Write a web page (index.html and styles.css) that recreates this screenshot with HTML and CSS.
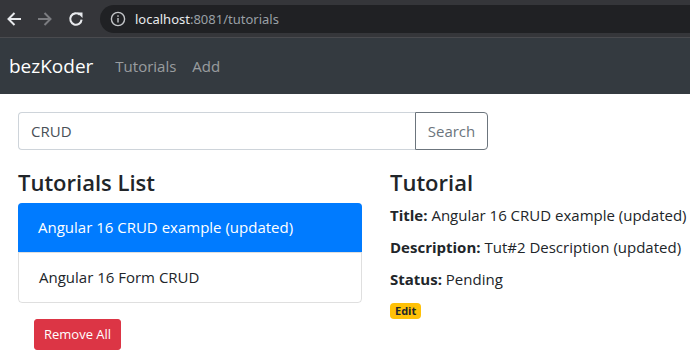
FILE: index.html
```html
<!DOCTYPE html>
<html lang="en">
<head>
    <meta charset="UTF-8">
    <meta name="viewport" content="width=device-width, initial-scale=1.0">
    <title>Tutorials</title>
    <link rel="stylesheet" href="styles.css">
</head>
<body>
    <div class="chrome">
        <div class="nav-icons">
            <svg class="icon" viewBox="0 0 16 16" width="16" height="16">
                <path d="M15 8H2.5M8.5 2L2.5 8l6 6" fill="none" stroke="#e8eaed" stroke-width="2"/>
            </svg>
            <svg class="icon" viewBox="0 0 16 16" width="16" height="16">
                <path d="M1 8h12.5M7.5 2l6 6-6 6" fill="none" stroke="#7b7c80" stroke-width="2"/>
            </svg>
            <svg class="icon" viewBox="0 0 16 16" width="16" height="16">
                <path d="M13.6 8.6A5.7 5.7 0 1 1 11.8 3.8" fill="none" stroke="#e8eaed" stroke-width="2.1"/>
                <path d="M9 1.5h5.5V7z" fill="#e8eaed"/>
            </svg>
        </div>
        <div class="omnibox">
            <svg class="info" viewBox="0 0 16 16" width="16" height="16">
                <circle cx="8" cy="8" r="6.6" fill="none" stroke="#c4c6c9" stroke-width="1.4"/>
                <rect x="7.3" y="7" width="1.4" height="4.5" fill="#c4c6c9"/>
                <rect x="7.3" y="4.3" width="1.4" height="1.5" fill="#c4c6c9"/>
            </svg>
            <span class="host">localhost</span><span class="path">:8081/tutorials</span>
        </div>
    </div>

    <nav class="navbar">
        <a class="brand" href="#">bezKoder</a>
        <a class="nav-link" href="#">Tutorials</a>
        <a class="nav-link" href="#">Add</a>
    </nav>

    <div class="page">
        <div class="search">
            <input type="text" value="CRUD" placeholder="Search by title">
            <button class="btn-search">Search</button>
        </div>

        <div class="columns">
            <div class="col-list">
                <h4>Tutorials List</h4>
                <ul class="list-group">
                    <li class="list-item active">Angular 16 CRUD example (updated)</li>
                    <li class="list-item">Angular 16 Form CRUD</li>
                </ul>
                <button class="btn-remove">Remove All</button>
            </div>

            <div class="col-detail">
                <h4>Tutorial</h4>
                <p><strong>Title:</strong> Angular 16 CRUD example (updated)</p>
                <p><strong>Description:</strong> Tut#2 Description (updated)</p>
                <p><strong>Status:</strong> Pending</p>
                <a class="badge" href="#">Edit</a>
            </div>
        </div>
    </div>
</body>
</html>
```

FILE: styles.css
```css
body {
    margin: 0;
    font-family: 'Open Sans', sans-serif;
    font-size: 15px;
    color: #212529;
    background-color: #fff;
    overflow: hidden;
}

/* browser toolbar */
.chrome {
    display: flex;
    align-items: center;
    height: 37px;
    background-color: #35363a;
    border-bottom: 1px solid #4a4b4f;
}

.nav-icons {
    display: flex;
    align-items: center;
    gap: 15px;
    padding-left: 6px;
    width: 94px;
}

.omnibox {
    flex: 1;
    display: flex;
    align-items: center;
    height: 28px;
    margin-top: 1px;
    background-color: #202124;
    border-radius: 14px 0 0 14px;
    padding-left: 10px;
    font-family: 'Noto Sans', sans-serif;
    font-size: 13px;
}

.info {
    margin-right: 9px;
}

.host {
    color: #e8eaed;
}

.path {
    color: #9aa0a6;
}

/* navbar */
.navbar {
    display: flex;
    align-items: center;
    height: 56px;
    padding: 0 16px 0 9px;
    background-color: #343a40;
}

.brand {
    font-size: 19px;
    color: #fff;
    text-decoration: none;
    margin-right: 22px;
}

.nav-link {
    color: rgba(255, 255, 255, 0.5);
    text-decoration: none;
    margin-right: 16px;
}

/* content */
.page {
    padding: 18px 0 0 18px;
}

.search {
    display: flex;
    width: 470px;
    height: 38px;
}

.search input {
    flex: 1;
    font: inherit;
    color: #495057;
    padding: 6px 12px;
    border: 1px solid #ced4da;
    border-radius: 4px 0 0 4px;
    border-right: none;
    outline: none;
}

.btn-search {
    width: 73px;
    font: inherit;
    color: #6c757d;
    background-color: #fff;
    border: 1px solid #6c757d;
    border-radius: 0 4px 4px 0;
}

.columns {
    display: flex;
    gap: 28px;
    margin-top: 18px;
}

h4 {
    font-size: 22px;
    font-weight: 600;
    margin: 0 0 7px;
    line-height: 28px;
}

.col-list {
    flex: none;
    width: 344px;
}

.col-detail {
    flex: none;
    white-space: nowrap;
}

.list-group {
    list-style: none;
    margin: 0;
    padding: 0;
    border: 1px solid rgba(0, 0, 0, 0.125);
    border-radius: 4px;
}

.list-item {
    padding: 12px 20px;
    line-height: 25px;
}

.list-item + .list-item {
    border-top: 1px solid rgba(0, 0, 0, 0.125);
}

.list-item.active {
    color: #fff;
    background-color: #007bff;
    margin: -1px -1px 0;
    border-radius: 4px 4px 0 0;
}

.btn-remove {
    margin: 16px;
    padding: 4px 9px;
    font-family: inherit;
    font-size: 13px;
    line-height: 21px;
    color: #fff;
    background-color: #dc3545;
    border: 1px solid #dc3545;
    border-radius: 3px;
}

.col-detail p {
    margin: 0 0 8px;
    line-height: 24px;
}

.badge {
    display: inline-block;
    padding: 2px 5px;
    font-size: 11px;
    font-weight: 700;
    line-height: 12px;
    color: #212529;
    background-color: #ffc107;
    border-radius: 4px;
    text-decoration: none;
}
```
